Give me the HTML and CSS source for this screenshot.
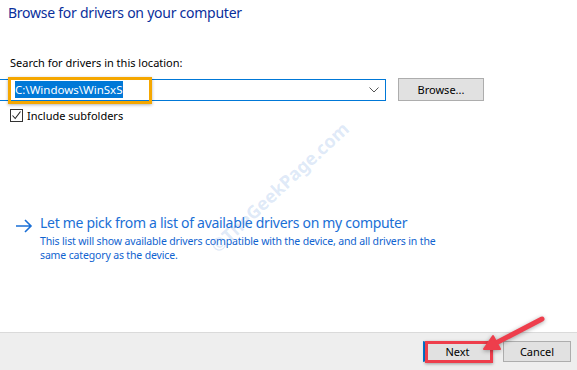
FILE: index.html
```html
<!DOCTYPE html>
<html lang="en">
<head>
<meta charset="UTF-8">
<title>Update Drivers</title>
<link rel="stylesheet" href="styles.css">
</head>
<body>
  <div class="dialog">
    <main class="content">
      <h1 class="title">Browse for drivers on your computer</h1>

      <div class="field-label">Search for drivers in this location:</div>
      <div class="path-row">
        <div class="combo">
          <span class="path-value"><span class="selected">C:\Windows\WinSxS</span></span>
          <svg class="chevron" width="10" height="6" viewBox="0 0 10 6"><path d="M0.5 0.5 L5 5 L9.5 0.5" fill="none" stroke="#555" stroke-width="1"/></svg>
          <span class="mark-orange"></span>
        </div>
        <button class="btn btn-browse">Browse...</button>
      </div>

      <label class="check">
        <span class="check-box">
          <svg width="11" height="11" viewBox="0 0 11 11"><path d="M1.5 5.5 L4.2 8.5 L9.5 1.5" fill="none" stroke="#222" stroke-width="1.1"/></svg>
        </span>
        Include subfolders
      </label>

      <a href="#" class="pick">
        <svg class="pick-arrow" width="18" height="14" viewBox="0 0 18 14"><path d="M1 7 H16 M10 1 L16 7 L10 13" fill="none" stroke="#1a6fd6" stroke-width="1.6"/></svg>
        <span class="pick-text">
          <span class="pick-title">Let me pick from a list of available drivers on my computer</span>
          <span class="pick-desc">This list will show available drivers compatible with the device, and all drivers in the same category as the device.</span>
        </span>
      </a>

      <span class="watermark">©TheGeekPage.com</span>
    </main>

    <footer class="footer">
      <button class="btn btn-default">Next<span class="mark-red"></span></button>
      <button class="btn">Cancel</button>
      <svg class="mark-arrow" width="80" height="50" viewBox="0 0 80 50">
        <path d="M72 13 L24 38" stroke="#ee3e4c" stroke-width="5" stroke-linecap="round" fill="none"/>
        <path d="M14 43 L23 30 L30 43 Z" fill="#ee3e4c" stroke="#ee3e4c" stroke-width="2" stroke-linejoin="round"/>
      </svg>
    </footer>
  </div>
</body>
</html>
```

FILE: styles.css
```css
body {
  margin: 0;
  padding: 0;
  font-family: "Noto Sans", "Open Sans", Arial, sans-serif;
  background: #fff;
  color: #000;
}

.dialog {
  width: 577px;
  height: 370px;
  display: flex;
  flex-direction: column;
  overflow: hidden;
}

.content {
  flex: 1;
  position: relative;
  padding: 0 0 0 10px;
}

.title {
  margin: 0 0 0 -2px;
  padding-top: 3px;
  font-size: 14px;
  letter-spacing: -0.25px;
  font-weight: normal;
  color: #0a2f9c;
  line-height: 20px;
}

.field-label {
  margin-top: 33px;
  font-size: 11px;
  line-height: 14px;
}

.path-row {
  display: flex;
  align-items: center;
  gap: 12px;
  margin-top: 8px;
}

.combo {
  position: relative;
  width: 386px;
  height: 22px;
  border: 1px solid #0078d7;
  border-left: none;
  display: flex;
  align-items: center;
  justify-content: space-between;
  padding: 0 6px 0 4px;
  box-sizing: border-box;
  margin-left: -10px;
}

.path-value {
  font-size: 11.5px;
  padding-left: 11px;
}

.selected {
  background: #0078d7;
  color: #fff;
  padding: 1px 0;
}

.chevron {
  display: block;
}

/* orange annotation over the path */
.mark-orange {
  position: absolute;
  left: 8px;
  top: -3px;
  width: 138px;
  height: 21px;
  border: 3px solid #f5a700;
  box-shadow: 0 1px 3px rgba(0, 0, 0, 0.3);
}

.btn {
  font-family: inherit;
  font-size: 11px;
  background: #e1e1e1;
  border: 1px solid #adadad;
  color: #000;
  padding: 0;
  height: 23px;
  cursor: pointer;
}

.btn-browse {
  width: 86px;
}

.check {
  display: flex;
  align-items: center;
  gap: 4px;
  margin-top: 7px;
  font-size: 11px;
}

.check-box {
  width: 11px;
  height: 11px;
  border: 1px solid #333;
  display: flex;
}

.pick {
  display: flex;
  align-items: flex-start;
  gap: 7px;
  margin-top: 90px;
  margin-left: 5px;
  text-decoration: none;
}

.pick-arrow {
  margin-top: 6px;
}

.pick-text {
  display: flex;
  flex-direction: column;
  width: 400px;
}

.pick-title {
  font-size: 14px;
  letter-spacing: -0.3px;
  line-height: 20px;
  color: #1a6fd6;
}

.pick-desc {
  font-size: 10.5px;
  letter-spacing: -0.15px;
  line-height: 14px;
  color: #0f63d0;
  margin-top: 1px;
}

/* site watermark */
.watermark {
  position: absolute;
  left: 189px;
  top: 175px;
  font-size: 18px;
  font-weight: bold;
  color: rgba(90, 145, 220, 0.2);
  transform: rotate(-43deg);
  pointer-events: none;
}

.footer {
  height: 37px;
  border-top: 1px solid #dadada;
  background: #eeeeee;
  position: relative;
  display: flex;
  justify-content: flex-end;
  align-items: center;
  gap: 12px;
  padding: 0 6px 0 0;
}

.footer .btn {
  width: 68px;
  height: 21px;
}

.btn-default {
  position: relative;
  border-left: 2px solid #0078d7;
}

/* red annotation round Next */
.mark-red {
  position: absolute;
  left: 0;
  top: -1px;
  right: -3px;
  bottom: -2px;
  border: 3px solid #ee3e4c;
  box-shadow: 0 1px 3px rgba(0, 0, 0, 0.35);
}

.mark-arrow {
  position: absolute;
  left: 470px;
  top: -27px;
  filter: drop-shadow(0 1px 2px rgba(0, 0, 0, 0.35));
}
```
